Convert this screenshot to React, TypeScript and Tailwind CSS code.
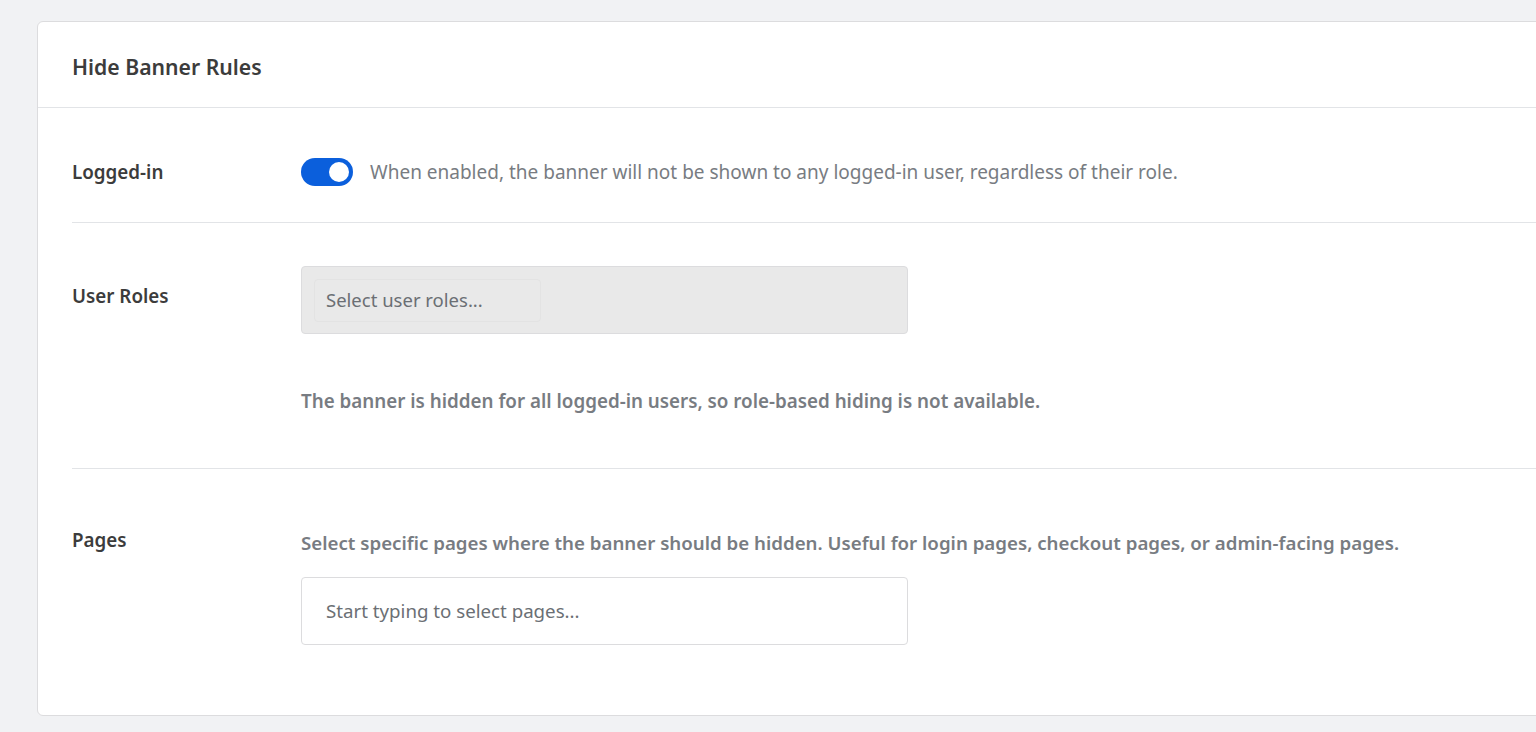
import React from "react";

const font = { fontFamily: '"Noto Sans", "Open Sans", sans-serif' };

function Toggle() {
  return (
    <span className="relative inline-flex h-[28px] w-[52px] shrink-0 items-center rounded-full bg-[#0b5fdc]">
      <span className="absolute right-[4px] h-[20px] w-[20px] rounded-full bg-white" />
    </span>
  );
}

export default function App() {
  return (
    <div className="min-h-[732px] w-full overflow-hidden bg-[#f1f2f4] pt-[21px] pl-[37px] pb-[17px]" style={font}>
      <div className="w-[1540px] rounded-[6px] border border-[#dcdcde] bg-white">
        {/* header */}
        <div className="flex h-[86px] items-center border-b border-[#e2e4e7] px-[34px] pt-[4px]">
          <h2 className="text-[21.2px] font-semibold text-[#3c3c3c]">Hide Banner Rules</h2>
        </div>

        <div className="pl-[34px]">
          {/* Logged-in */}
          <div className="grid h-[115px] grid-cols-[229px_1fr] items-center border-b border-[#e2e4e7] pt-[14px]">
            <div className="text-[18.8px] font-semibold text-[#3c3c3c]">Logged-in</div>
            <div className="flex items-center gap-[17px]">
              <Toggle />
              <span className="text-[19px] text-[#787c82]">
                When enabled, the banner will not be shown to any logged-in user, regardless of their role.
              </span>
            </div>
          </div>

          {/* User Roles */}
          <div className="grid h-[246px] grid-cols-[229px_1fr] border-b border-[#e2e4e7] pt-[43px]">
            <div className="pt-[16px] text-[18.8px] font-semibold text-[#3c3c3c]">User Roles</div>
            <div>
              <div className="flex h-[68px] w-[607px] items-center rounded-[4px] border border-[#dcdcde] bg-[#e9e9e9] px-[12px]">
                <div className="flex h-[43px] w-[227px] items-center rounded-[4px] border border-[#e3e3e3] px-[11px] text-[18.5px] text-[#6b6f74]">
                  Select user roles...
                </div>
              </div>
              <p className="mt-[53px] text-[18.8px] font-semibold text-[#787c82]">
                The banner is hidden for all logged-in users, so role-based hiding is not available.
              </p>
            </div>
          </div>

          {/* Pages */}
          <div className="grid h-[246px] grid-cols-[229px_1fr] pt-[57px]">
            <div className="text-[18.8px] font-semibold text-[#3c3c3c]">Pages</div>
            <div>
              <p className="pt-[3px] text-[18.7px] font-semibold text-[#787c82]">
                Select specific pages where the banner should be hidden. Useful for login pages, checkout pages, or admin-facing pages.
              </p>
              <div className="mt-[20px] flex h-[68px] w-[607px] items-center rounded-[4px] border border-[#dcdcde] bg-white px-[24px] text-[18.7px] text-[#6b6f74]">
                Start typing to select pages...
              </div>
            </div>
          </div>
        </div>
      </div>
    </div>
  );
}
